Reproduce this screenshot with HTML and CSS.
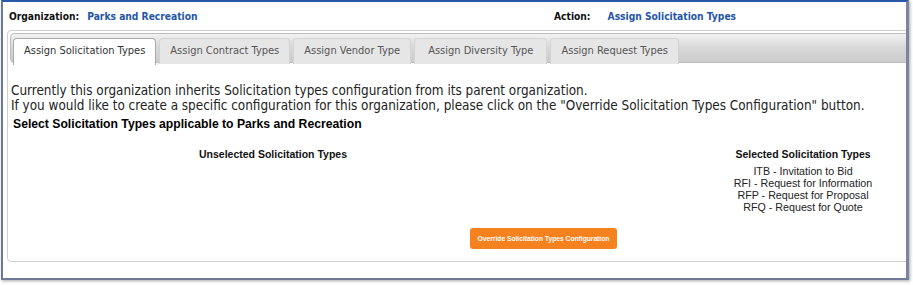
FILE: index.html
```html
<!DOCTYPE html>
<html>
<head>
<meta charset="utf-8">
<link rel="stylesheet" href="styles.css">
</head>
<body>
<div class="frame">
  <div class="header">
    <div class="field field-org"><span class="label">Organization:</span><span class="value">Parks and Recreation</span></div>
    <div class="field field-action"><span class="label">Action:</span><span class="value">Assign Solicitation Types</span></div>
  </div>
  <div class="panel">
    <ul class="tabs">
      <li class="tab active">Assign Solicitation Types</li>
      <li class="tab">Assign Contract Types</li>
      <li class="tab">Assign Vendor Type</li>
      <li class="tab">Assign Diversity Type</li>
      <li class="tab">Assign Request Types</li>
    </ul>
    <div class="content">
      <p class="notice">Currently this organization inherits Solicitation types configuration from its parent organization.<br>If you would like to create a specific configuration for this organization, please click on the "Override Solicitation Types Configuration" button.</p>
      <h3 class="title">Select Solicitation Types applicable to Parks and Recreation</h3>
      <div class="columns">
        <div class="col col-left"><h4 class="col-head">Unselected Solicitation Types</h4></div>
        <div class="col col-mid"></div>
        <div class="col col-right">
          <h4 class="col-head">Selected Solicitation Types</h4>
          <ul class="items">
            <li>ITB - Invitation to Bid</li>
            <li>RFI - Request for Information</li>
            <li>RFP - Request for Proposal</li>
            <li>RFQ - Request for Quote</li>
          </ul>
        </div>
      </div>
      <div class="actions"><button class="btn">Override Solicitation Types Configuration</button></div>
    </div>
  </div>
</div>
</body>
</html>
```
FILE: styles.css
```css
html, body { margin: 0; padding: 0; background: #fff; }
body { width: 913px; height: 285px; overflow: hidden; }
.frame {
  box-sizing: border-box;
  width: 908px;
  height: 280px;
  margin-left: 1px;
  border-top: 2px solid #2b58a6;
  border-left: 2px solid #6b7995;
  border-right: 3px solid #7a859f;
  border-bottom: 2px solid #6f7b96;
  box-shadow: 1px 1px 3px rgba(0,0,0,0.35);
  background: #fff;
  overflow: hidden;
}
.header {
  display: flex;
  height: 28px;
  align-items: center;
  padding-left: 6px;
  font-family: "DejaVu Sans", sans-serif;
  font-stretch: condensed;
  font-size: 10.2px;
  font-weight: bold;
}
.field-org { width: 545px; }
.label { color: #111; margin-right: 8px; }
.field-action .label { margin-right: 17px; }
.value { color: #1f56a8; }
.panel {
  margin-left: 4px;
  margin-right: -6px;
  border: 1px solid #cfcfcf;
  border-radius: 4px;
  padding: 2px;
  height: 232px;
  box-sizing: border-box;
}
.tabs {
  list-style: none;
  margin: 0;
  padding: 4px 0 0 2px;
  height: 30px;
  box-sizing: border-box;
  display: flex;
  gap: 3px;
  background: linear-gradient(#f2f2f2, #d9d9d9 45%, #cccccc);
  border: 1px solid #bdbdbd;
  border-radius: 4px;
}
.tab {
  box-sizing: border-box;
  height: 26px;
  padding: 0 10px;
  line-height: 24px;
  font-family: "DejaVu Sans", sans-serif;
  font-stretch: condensed;
  font-size: 11px;
  color: #555;
  background: #e6e6e6;
  border: 1px solid #d3d3d3;
  border-bottom: none;
  border-radius: 4px 4px 0 0;
}
.tab.active {
  background: #fff;
  color: #333;
  border-color: #aaa;
  height: 27px;
}
.tab:nth-child(4) { padding: 0 13px; }
.content {
  padding: 20px 2px 0 1px;
  color: #222;
}
.notice {
  margin: 0;
  font-family: "DejaVu Sans", sans-serif;
  font-stretch: condensed;
  font-size: 13.4px;
  line-height: 15px;
}
.title {
  margin: 3px 0 0 2px;
  font-family: "Liberation Sans", Arial, sans-serif;
  font-size: 12.2px;
  font-weight: bold;
  line-height: 16px;
  color: #000;
}
.columns {
  display: grid;
  grid-template-columns: 524px 164px 1fr;
  margin-top: 15px;
  font-family: "Liberation Sans", Arial, sans-serif;
  text-align: center;
}
.col-head {
  margin: 0;
  font-size: 10.5px;
  font-weight: bold;
  line-height: 14px;
  color: #111;
}
.items {
  list-style: none;
  margin: 4px 0 0;
  padding: 0;
  font-size: 10.7px;
  line-height: 12px;
  color: #222;
}
.actions {
  padding-left: 459px;
  margin-top: 14px;
}
.btn {
  width: 147px;
  height: 21px;
  border: none;
  border-radius: 3px;
  background: #f5821f;
  color: #fff;
  font-family: "Liberation Sans", Arial, sans-serif;
  font-size: 6.7px;
  font-weight: bold;
  white-space: nowrap;
  padding: 0;
}
```
